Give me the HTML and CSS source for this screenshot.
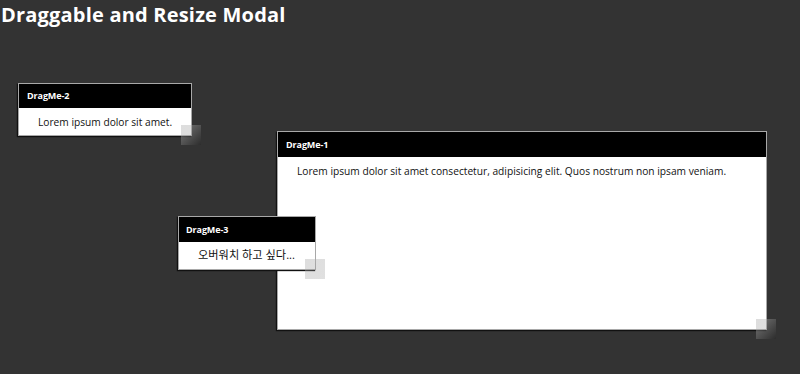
FILE: index.html
```html
<!DOCTYPE html>
<html lang="ko">
<head>
<meta charset="utf-8">
<title>Draggable and Resize Modal</title>
<link rel="stylesheet" href="styles.css">
</head>
<body>
<h1 class="title">Draggable and Resize Modal</h1>
<div class="desk">
  <div class="modal modal-2">
    <div class="modal-head">DragMe-2</div>
    <div class="modal-body">Lorem ipsum dolor sit amet.</div>
    <div class="handle"></div>
  </div>
  <div class="modal modal-1">
    <div class="modal-head">DragMe-1</div>
    <div class="modal-body">Lorem ipsum dolor sit amet consectetur, adipisicing elit. Quos nostrum non ipsam veniam.</div>
    <div class="handle"></div>
  </div>
  <div class="modal modal-3">
    <div class="modal-head">DragMe-3</div>
    <div class="modal-body">오버워치 하고 싶다...</div>
    <div class="handle"></div>
  </div>
</div>
</body>
</html>
```
FILE: styles.css
```css
html, body {
  margin: 0;
  padding: 0;
  background: #333333;
  height: 100%;
  overflow: hidden;
  font-family: "Open Sans", "Noto Sans CJK KR", sans-serif;
}
.title {
  margin: 0;
  padding: 3px 0 0 1px;
  color: #ffffff;
  font-size: 20px;
  line-height: 24px;
  font-weight: 700;
  letter-spacing: 0.2px;
}
.desk {
  position: relative;
}
.modal {
  position: absolute;
  box-sizing: border-box;
  background: #ffffff;
  border: 1px solid #a8a8a8;
  box-shadow: -1px 1px 1px #111;
  display: flex;
  flex-direction: column;
}
.modal-head {
  background: #000000;
  color: #ffffff;
  font-size: 9px;
  font-weight: 700;
  letter-spacing: -0.1px;
  height: 24px;
  line-height: 24px;
  padding: 0 8px;
  flex: none;
}
.modal-body {
  padding: 7px 19px;
  font-size: 10.2px;
  line-height: 14px;
  color: #111;
  white-space: nowrap;
}
.handle {
  position: absolute;
  right: -10px;
  bottom: -10px;
  width: 20px;
  height: 20px;
  background: linear-gradient(135deg, rgba(188,188,188,0.5), rgba(0,0,0,0.12));
}
.modal-1 { left: 277px; top: 104px; width: 490px; height: 199px; }
.modal-1 .modal-head { height: 25px; line-height: 25px; }
.modal-2 { left: 18px; top: 56px; width: 174px; height: 53px; }
.modal-3 { left: 178px; top: 189px; width: 138px; height: 54px; }
.modal-3 .modal-head { padding-left: 7px; height: 25px; line-height: 25px; }
.modal-3 .modal-body { font-size: 11.2px; padding-top: 6px; }
```
